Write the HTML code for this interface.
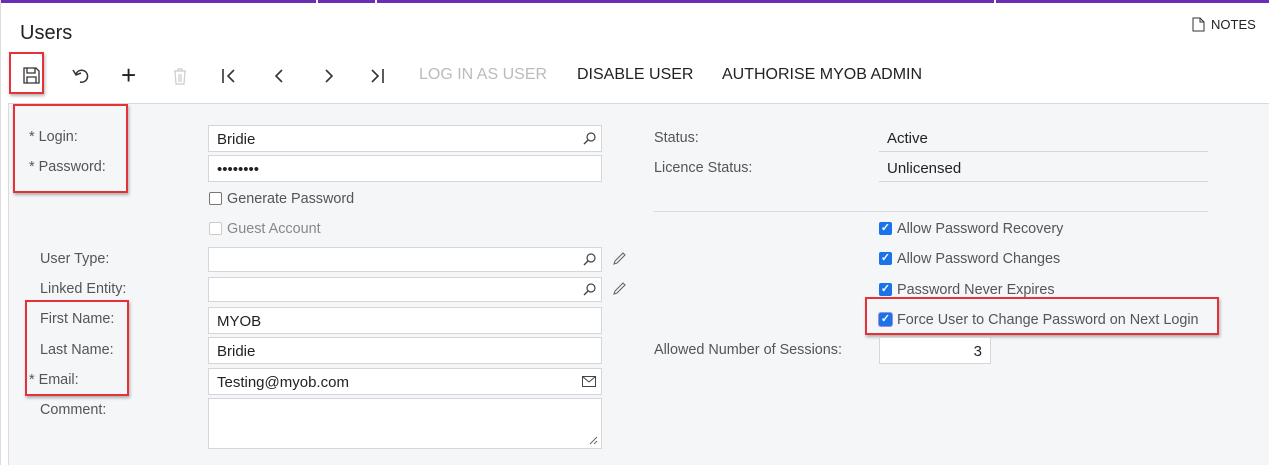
<!DOCTYPE html>
<html><head><style>
*{box-sizing:border-box;margin:0;padding:0}
body{width:1269px;height:465px;background:#fff;font-family:"Liberation Sans",Arial,sans-serif;position:relative;overflow:hidden;color:#222}
.a{position:absolute}
.bar{top:0;height:3px;background:#6b2fb5}
.lbl{font-size:14.4px;color:#555}
.inp{background:#fff;border:1px solid #d3d6db;height:27px;font-size:15px;padding:5px 8px;color:#222}
.red{border:2px solid #e53238;box-shadow:1px 2px 3px rgba(0,0,0,.3)}
.cb{width:13px;height:13px;border:1px solid #777;border-radius:2px;background:#fff}
.cbc{width:13px;height:13px;border-radius:2px;background:#1a73e8;color:#fff;font-size:11px;line-height:13px;text-align:center;font-weight:bold}
.tb{top:66px;font-size:16px;color:#222}
.ul{border-bottom:1px solid #d3d6db}
.srch{position:absolute;right:5px;top:6px}
</style></head><body>
<div class="a bar" style="left:0;width:316px"></div>
<div class="a bar" style="left:318px;width:57px"></div>
<div class="a bar" style="left:377px;width:617px"></div>
<div class="a bar" style="left:996px;width:273px"></div>
<div class="a" style="left:0;top:0;width:1px;height:465px;background:#ddd"></div>
<div class="a" style="left:20px;top:22px;font-size:20px;color:#222">Users</div>
<div class="a" style="left:1192px;top:17px;font-size:13px;color:#222"><svg width="13" height="15" style="vertical-align:-3px;margin-right:6px"><path d="M1 1h7l4 4v9H1z M8 1v4h4" fill="none" stroke="#333"/></svg>NOTES</div>
<div class="a red" style="left:9px;top:52px;width:35px;height:42px"></div>
<svg class="a" style="left:23px;top:67px" width="17" height="17"><path d="M1 1h12l3 3v12H1z M4 1v5h8V1 M4 16v-6h9v6" fill="none" stroke="#333" stroke-width="1.3"/></svg>
<svg class="a" style="left:72px;top:67px" width="18" height="16"><path d="M4 7 A6 6 0 1 1 8 15 M1 3 L4 8 L9 6" fill="none" stroke="#333" stroke-width="1.5"/></svg>
<div class="a tb" style="left:121px;top:60px;font-size:26px;font-weight:300">+</div>
<svg class="a" style="left:173px;top:68px" width="14" height="17"><path d="M1 3h12M5 3V1h4v2M2 3l1 13h8l1-13M6 6v8M8 6v8" fill="none" stroke="#ccc" stroke-width="1.2"/></svg>
<svg class="a" style="left:222px;top:69px" width="14" height="14"><path d="M1 0v14M12 1L6 7l6 6" fill="none" stroke="#333" stroke-width="1.6"/></svg>
<svg class="a" style="left:274px;top:69px" width="10" height="14"><path d="M8 1L2 7l6 6" fill="none" stroke="#333" stroke-width="1.6"/></svg>
<svg class="a" style="left:324px;top:69px" width="10" height="14"><path d="M2 1l6 6-6 6" fill="none" stroke="#333" stroke-width="1.6"/></svg>
<svg class="a" style="left:370px;top:69px" width="16" height="14"><path d="M2 1l6 6-6 6M13 0v14" fill="none" stroke="#333" stroke-width="1.6"/></svg>
<div class="a tb" style="left:419px;color:#bbb">LOG IN AS USER</div>
<div class="a tb" style="left:577px">DISABLE USER</div>
<div class="a tb" style="left:722px">AUTHORISE MYOB ADMIN</div>
<div class="a" style="left:8px;top:103px;width:1261px;height:362px;background:#f5f6f8;border-top:1px solid #d8dadf;border-left:1px solid #d8dadf"></div>
<div class="a red" style="left:13px;top:104px;width:115px;height:89px"></div>
<div class="a red" style="left:25px;top:300px;width:104px;height:96px"></div>
<div class="a lbl" style="left:29px;top:129px">* Login:</div>
<div class="a lbl" style="left:29px;top:159px">* Password:</div>
<div class="a lbl" style="left:40px;top:251px">User Type:</div>
<div class="a lbl" style="left:40px;top:281px">Linked Entity:</div>
<div class="a lbl" style="left:40px;top:311px">First Name:</div>
<div class="a lbl" style="left:40px;top:342px">Last Name:</div>
<div class="a lbl" style="left:29px;top:372px">* Email:</div>
<div class="a lbl" style="left:40px;top:402px">Comment:</div>
<div class="a inp" style="left:208px;top:125px;width:394px">Bridie<svg class="srch" width="13" height="13"><circle cx="8" cy="5" r="4" fill="none" stroke="#444" stroke-width="1.2"/><path d="M5 8L1 12" stroke="#444" stroke-width="1.4"/></svg></div>
<div class="a inp" style="left:208px;top:155px;width:394px">••••••••</div>
<div class="a cb" style="left:209px;top:192px"></div><div class="a lbl" style="left:227px;top:191px">Generate Password</div>
<div class="a cb" style="left:209px;top:222px;border-color:#ccc"></div><div class="a lbl" style="left:227px;top:221px;color:#888">Guest Account</div>
<div class="a inp" style="left:208px;top:247px;width:394px;height:25px"><svg class="srch" style="top:5px" width="13" height="13"><circle cx="8" cy="5" r="4" fill="none" stroke="#444" stroke-width="1.2"/><path d="M5 8L1 12" stroke="#444" stroke-width="1.4"/></svg></div>
<div class="a inp" style="left:208px;top:277px;width:394px;height:25px"><svg class="srch" style="top:5px" width="13" height="13"><circle cx="8" cy="5" r="4" fill="none" stroke="#444" stroke-width="1.2"/><path d="M5 8L1 12" stroke="#444" stroke-width="1.4"/></svg></div>
<svg class="a" style="left:612px;top:252px" width="14" height="14"><path d="M2 12l1-3 8-8 2 2-8 8z" fill="none" stroke="#666" stroke-width="1.1"/></svg>
<svg class="a" style="left:612px;top:282px" width="14" height="14"><path d="M2 12l1-3 8-8 2 2-8 8z" fill="none" stroke="#666" stroke-width="1.1"/></svg>
<div class="a inp" style="left:208px;top:307px;width:394px">MYOB</div>
<div class="a inp" style="left:208px;top:337px;width:394px">Bridie</div>
<div class="a inp" style="left:208px;top:368px;width:394px">Testing@myob.com<svg class="srch" style="top:7px" width="14" height="11"><rect x="0.5" y="0.5" width="13" height="10" fill="none" stroke="#444"/><path d="M0.5 0.5L7 6l6.5-5.5" fill="none" stroke="#444"/></svg></div>
<div class="a inp" style="left:208px;top:398px;width:394px;height:51px"><svg style="position:absolute;right:3px;bottom:3px" width="9" height="9"><path d="M8 1L1 8M8 5L5 8" stroke="#666"/></svg></div>
<div class="a lbl" style="left:654px;top:130px">Status:</div>
<div class="a lbl" style="left:654px;top:160px">Licence Status:</div>
<div class="a ul" style="left:879px;top:123px;width:329px;height:29px;font-size:15px;padding:7px 8px">Active</div>
<div class="a ul" style="left:879px;top:153px;width:329px;height:29px;font-size:15px;padding:7px 8px">Unlicensed</div>
<div class="a" style="left:654px;top:211px;width:554px;height:1px;background:#d8dadf"></div>
<div class="a cbc" style="left:879px;top:222px">✓</div><div class="a lbl" style="left:897px;top:221px">Allow Password Recovery</div>
<div class="a cbc" style="left:879px;top:252px">✓</div><div class="a lbl" style="left:897px;top:251px">Allow Password Changes</div>
<div class="a cbc" style="left:879px;top:283px">✓</div><div class="a lbl" style="left:897px;top:282px">Password Never Expires</div>
<div class="a red" style="left:865px;top:297px;width:354px;height:38px"></div>
<div class="a cbc" style="left:879px;top:313px;box-shadow:0 0 0 1px #a58ad6">✓</div><div class="a lbl" style="left:897px;top:312px">Force User to Change Password on Next Login</div>
<div class="a lbl" style="left:654px;top:342px">Allowed Number of Sessions:</div>
<div class="a inp" style="left:879px;top:337px;width:112px;text-align:right">3</div>
</body></html>
